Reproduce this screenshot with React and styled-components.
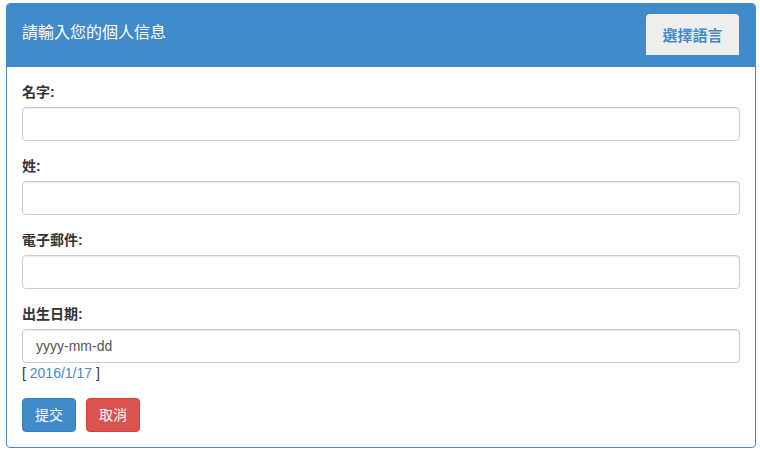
import React from "react";
import styled, { createGlobalStyle } from "styled-components";

const Global = createGlobalStyle`
  html, body { margin: 0; padding: 0; background: #fff; }
  body {
    font-family: "Liberation Sans", Arial, "Noto Sans CJK TC", sans-serif;
    font-size: 14px;
    line-height: 20px;
    color: #333;
  }
  * { box-sizing: border-box; }
`;

const Page = styled.div`
  padding: 3px 4px 0 6px;
`;

const Panel = styled.div`
  border: 1px solid #428bca;
  border-radius: 4px;
  background: #fff;
  overflow: hidden;
`;

const Heading = styled.div`
  background: #428bca;
  color: #fff;
  display: flex;
  align-items: flex-start;
  justify-content: space-between;
  padding: 10px 16px 12px 15px;
`;

const Title = styled.h3`
  margin: 0;
  font-size: 16px;
  font-weight: normal;
  line-height: 20px;
  padding-top: 9px;
  font-family: "Liberation Sans", Arial, "Noto Sans CJK TC", sans-serif;
`;

const Tab = styled.button`
  height: 41px;
  width: 93px;
  border: none;
  border-radius: 4px 4px 0 0;
  background: #eee;
  color: #428bca;
  font-weight: bold;
  font-size: 15px;
  font-family: "Liberation Sans", Arial, "Noto Sans CJK TC", sans-serif;
  padding: 0;
  cursor: pointer;
`;

const Body = styled.div`
  padding: 15px;
`;

const Group = styled.div`
  margin-bottom: ${(p) => (p.$tight ? "0" : "15px")};
`;

const Label = styled.label`
  display: block;
  font-weight: bold;
  margin-bottom: 5px;
  line-height: 20px;
`;

const Input = styled.input`
  display: block;
  width: 100%;
  height: 34px;
  padding: 6px 13px;
  font-size: 14px;
  font-family: "Liberation Sans", Arial, sans-serif;
  color: #555;
  border: 1px solid #ccc;
  border-radius: 4px;
  box-shadow: inset 0 1px 1px rgba(0, 0, 0, 0.075);
  outline: none;
  &::placeholder { color: #555; }
`;

const Help = styled.div`
  line-height: 20px;
  color: #333;
  margin-bottom: 15px;
`;

const Link = styled.a`
  color: #428bca;
  text-decoration: none;
`;

const Actions = styled.div`
  display: flex;
  gap: 10px;
`;

const Btn = styled.button`
  height: 34px;
  padding: 6px 12px;
  font-size: 14px;
  line-height: 20px;
  font-family: "Liberation Sans", Arial, "Noto Sans CJK TC", sans-serif;
  color: #fff;
  border-radius: 4px;
  border: 1px solid ${(p) => (p.$danger ? "#d43f3a" : "#357ebd")};
  background: ${(p) => (p.$danger ? "#d9534f" : "#428bca")};
  cursor: pointer;
`;

export default function App() {
  return (
    <Page>
      <Global />
      <Panel>
        <Heading>
          <Title>請輸入您的個人信息</Title>
          <Tab>選擇語言</Tab>
        </Heading>
        <Body>
          <Group>
            <Label>名字:</Label>
            <Input type="text" />
          </Group>
          <Group>
            <Label>姓:</Label>
            <Input type="text" />
          </Group>
          <Group>
            <Label>電子郵件:</Label>
            <Input type="text" />
          </Group>
          <Group $tight>
            <Label>出生日期:</Label>
            <Input type="text" placeholder="yyyy-mm-dd" />
          </Group>
          <Help>
            [ <Link href="#">2016/1/17</Link> ]
          </Help>
          <Actions>
            <Btn>提交</Btn>
            <Btn $danger>取消</Btn>
          </Actions>
        </Body>
      </Panel>
    </Page>
  );
}
